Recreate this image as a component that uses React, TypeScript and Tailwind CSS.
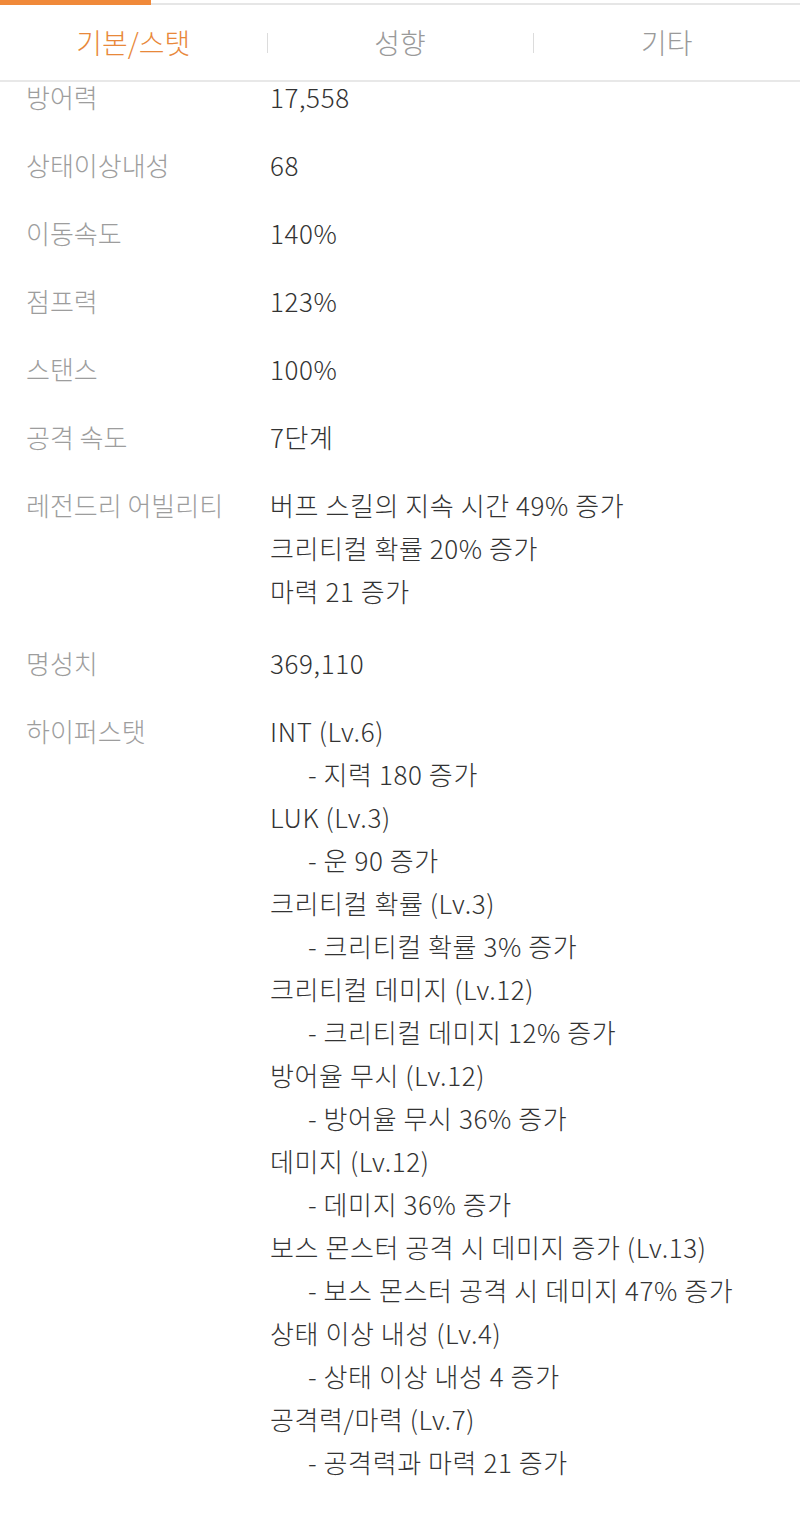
import React from 'react';

type Line = { text: string; sub?: boolean };
type Row = { label: string; lines: Line[]; extra?: string };

const rows: Row[] = [
  { label: '방어력', lines: [{ text: '17,558' }] },
  { label: '상태이상내성', lines: [{ text: '68' }] },
  { label: '이동속도', lines: [{ text: '140%' }] },
  { label: '점프력', lines: [{ text: '123%' }] },
  { label: '스탠스', lines: [{ text: '100%' }] },
  { label: '공격 속도', lines: [{ text: '7단계' }] },
  {
    label: '레전드리 어빌리티',
    lines: [
      { text: '버프 스킬의 지속 시간 49% 증가' },
      { text: '크리티컬 확률 20% 증가' },
      { text: '마력 21 증가' },
    ],
    extra: 'pb-[17px]',
  },
  { label: '명성치', lines: [{ text: '369,110' }] },
  {
    label: '하이퍼스탯',
    lines: [
      { text: 'INT (Lv.6)' },
      { text: '- 지력 180 증가', sub: true },
      { text: 'LUK (Lv.3)' },
      { text: '- 운 90 증가', sub: true },
      { text: '크리티컬 확률 (Lv.3)' },
      { text: '- 크리티컬 확률 3% 증가', sub: true },
      { text: '크리티컬 데미지 (Lv.12)' },
      { text: '- 크리티컬 데미지 12% 증가', sub: true },
      { text: '방어율 무시 (Lv.12)' },
      { text: '- 방어율 무시 36% 증가', sub: true },
      { text: '데미지 (Lv.12)' },
      { text: '- 데미지 36% 증가', sub: true },
      { text: '보스 몬스터 공격 시 데미지 증가 (Lv.13)' },
      { text: '- 보스 몬스터 공격 시 데미지 47% 증가', sub: true },
      { text: '상태 이상 내성 (Lv.4)' },
      { text: '- 상태 이상 내성 4 증가', sub: true },
      { text: '공격력/마력 (Lv.7)' },
      { text: '- 공격력과 마력 21 증가', sub: true },
    ],
  },
];

const tabs = ['기본/스탯', '성향', '기타'];

export default function App() {
  return (
    <div
      className="w-[800px] h-[1523px] overflow-hidden bg-white"
      style={{ fontFamily: '"Noto Sans CJK KR", "Noto Sans", sans-serif' }}
    >
      {/* progress strip */}
      <div className="relative h-[5px] bg-white">
        <div className="absolute left-0 right-0 top-[3px] h-[2px] bg-[#e6e6e6]" />
        <div className="absolute left-0 top-0 h-[5px] w-[151px] bg-[#f0893a]" />
      </div>

      {/* tabs */}
      <div className="flex h-[77px] items-center border-b-2 border-[#e8e8e8]">
        {tabs.map((t, i) => (
          <div key={t} className="relative flex flex-1 items-center justify-center">
            {i > 0 && <div className="absolute left-0 top-1/2 h-[20px] w-px -translate-y-1/2 bg-[#dcdcdc]" />}
            <span
              className={`-mt-[2px] text-[28px] font-light leading-none ${
                i === 0 ? 'text-[#e8883a]' : 'text-[#9a9a9a]'
              }`}
            >
              {t}
            </span>
          </div>
        ))}
      </div>

      {/* stat rows */}
      <div className="-mt-[19px]">
        {rows.map((r) => (
          <div key={r.label} className={`flex pt-[12px] pb-[13px] ${r.extra ?? ''}`}>
            <div className="w-[270px] shrink-0 pl-[26px] text-[26px] font-light leading-[43px] text-[#9d9d9d]">
              {r.label}
            </div>
            <div className="flex flex-col">
              {r.lines.map((l, i) => (
                <div
                  key={i}
                  className={`whitespace-nowrap text-[26px] font-light leading-[43px] tracking-[0.6px] text-[#333333] ${
                    l.sub ? 'pl-[38px]' : ''
                  }`}
                >
                  {l.text}
                </div>
              ))}
            </div>
          </div>
        ))}
      </div>
    </div>
  );
}
